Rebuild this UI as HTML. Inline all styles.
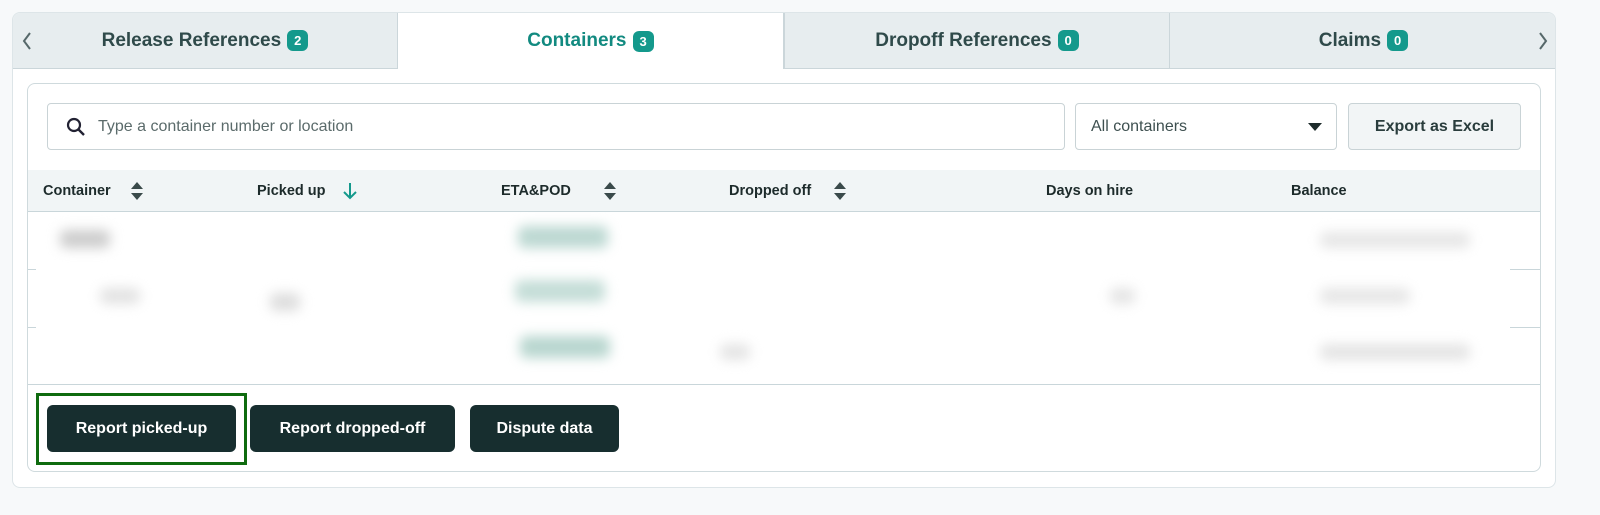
<!DOCTYPE html>
<html><head><style>
*{box-sizing:border-box;margin:0;padding:0}
body{width:1600px;height:515px;background:#f7f9fa;font-family:"Liberation Sans",sans-serif;position:relative;overflow:hidden}
.a{position:absolute}
.card{left:12px;top:12px;width:1544px;height:476px;background:#fff;border:1px solid #dde5e8;border-radius:8px;overflow:hidden}
.tab{top:0;height:56px;background:#e7edef;border-bottom:1px solid #cbd6da;border-right:1px solid #cbd6da;display:flex;align-items:center;justify-content:center;font-size:19px;font-weight:bold;color:#2f4a4a}
.tab.act{background:#fff;color:#128a80;border-bottom:none}
.badge{display:inline-block;background:#14998c;color:#fff;font-size:13px;border-radius:6px;padding:3px 7px;margin-left:6px}
.panel{left:27px;top:83px;width:1514px;height:389px;border:1px solid #cfdadd;border-radius:8px}
.inp{border:1px solid #c9d3d6;border-radius:4px;background:#fff;display:flex;align-items:center;font-size:16px;color:#5b6b6b}
.hd{left:28px;top:170px;width:1512px;height:42px;background:#f1f5f6;border-bottom:1px solid #c9d6da;font-size:14.5px;font-weight:bold;color:#1d2b2b}
.hd span{position:absolute;top:13px}
.btn{top:405px;height:47px;background:#172e2f;color:#fff;font-size:16px;font-weight:bold;border-radius:6px;display:flex;align-items:center;justify-content:center}
.bl{position:absolute;filter:blur(6px);border-radius:6px}
</style></head><body>
<div class="a card">
 <div class="a tab" style="left:0;width:385px">Release References<span class="badge">2</span></div>
 <div class="a tab act" style="left:385px;width:386px">Containers<span class="badge">3</span></div>
 <div class="a tab" style="left:771px;width:386px;border-left:1px solid #cbd6da">Dropoff References<span class="badge">0</span></div>
 <div class="a tab" style="left:1157px;width:387px;border-right:none">Claims<span class="badge">0</span></div>
 <svg class="a" style="left:8px;top:18px" width="12" height="20"><path d="M9 2L3 10L9 18" stroke="#56686a" stroke-width="2" fill="none"/></svg>
 <svg class="a" style="left:1524px;top:18px" width="12" height="20"><path d="M3 2L9 10L3 18" stroke="#56686a" stroke-width="2" fill="none"/></svg>
</div>
<div class="a panel"></div>
<div class="a inp" style="left:47px;top:103px;width:1018px;height:47px;padding-left:18px">
 <svg width="20" height="20" style="margin-right:12px"><circle cx="8" cy="8" r="6" stroke="#223" stroke-width="2.2" fill="none"/><path d="M12.5 12.5L18 18" stroke="#223" stroke-width="2.4"/></svg>Type a container number or location</div>
<div class="a inp" style="left:1075px;top:103px;width:262px;height:47px;padding-left:15px;color:#3e5050">All containers
 <svg class="a" style="left:232px;top:19px" width="14" height="9"><path d="M0 0H14L7 8Z" fill="#1d2b2b"/></svg></div>
<div class="a inp" style="left:1348px;top:103px;width:173px;height:47px;justify-content:center;background:#f2f5f6;color:#2a3d3d;font-weight:bold">Export as Excel</div>
<div class="a hd">
 <span style="left:15px">Container</span>
 <svg class="a" style="left:102px;top:12px" width="14" height="18"><path d="M1 7L7 0L13 7Z M1 11L7 18L13 11Z" fill="#3a4a4a"/></svg>
 <span style="left:229px">Picked up</span>
 <svg class="a" style="left:315px;top:12px" width="14" height="18"><path d="M7 1V16M1 10L7 16L13 10" stroke="#14998c" stroke-width="2" fill="none"/></svg>
 <span style="left:473px">ETA&amp;POD</span>
 <svg class="a" style="left:575px;top:12px" width="14" height="18"><path d="M1 7L7 0L13 7Z M1 11L7 18L13 11Z" fill="#3a4a4a"/></svg>
 <span style="left:701px">Dropped off</span>
 <svg class="a" style="left:805px;top:12px" width="14" height="18"><path d="M1 7L7 0L13 7Z M1 11L7 18L13 11Z" fill="#3a4a4a"/></svg>
 <span style="left:1018px">Days on hire</span>
 <span style="left:1263px">Balance</span>
</div>
<div class="a" style="left:28px;top:269px;width:1512px;border-top:1px solid #c9d6da"></div>
<div class="a" style="left:28px;top:327px;width:1512px;border-top:1px solid #c9d6da"></div>
<div class="a" style="left:36px;top:218px;width:1474px;height:152px;background:#fff"></div>
<div class="bl" style="left:60px;top:230px;width:50px;height:18px;background:#ccc"></div>
<div class="bl" style="left:518px;top:226px;width:90px;height:22px;background:#bcd8d2"></div>
<div class="bl" style="left:515px;top:280px;width:90px;height:22px;background:#c4ddd7"></div>
<div class="bl" style="left:520px;top:336px;width:90px;height:22px;background:#b8d6cf"></div>
<div class="bl" style="left:270px;top:293px;width:30px;height:18px;background:#ddd"></div>
<div class="bl" style="left:100px;top:288px;width:40px;height:16px;background:#e2e2e2"></div>
<div class="bl" style="left:1320px;top:232px;width:150px;height:16px;background:#e6e6e6"></div>
<div class="bl" style="left:1320px;top:288px;width:90px;height:16px;background:#e6e6e6"></div>
<div class="bl" style="left:1320px;top:344px;width:150px;height:16px;background:#e4e4e4"></div>
<div class="bl" style="left:720px;top:344px;width:30px;height:16px;background:#e4e4e4"></div>
<div class="bl" style="left:1110px;top:288px;width:25px;height:16px;background:#e4e4e4"></div>
<div class="a" style="left:28px;top:384px;width:1512px;border-top:1px solid #c9d6da"></div>
<div class="a" style="left:36px;top:393px;width:211px;height:72px;border:3px solid #0f6b0f"></div>
<div class="a btn" style="left:47px;width:189px">Report picked-up</div>
<div class="a btn" style="left:250px;width:205px">Report dropped-off</div>
<div class="a btn" style="left:470px;width:149px">Dispute data</div>
</body></html>
